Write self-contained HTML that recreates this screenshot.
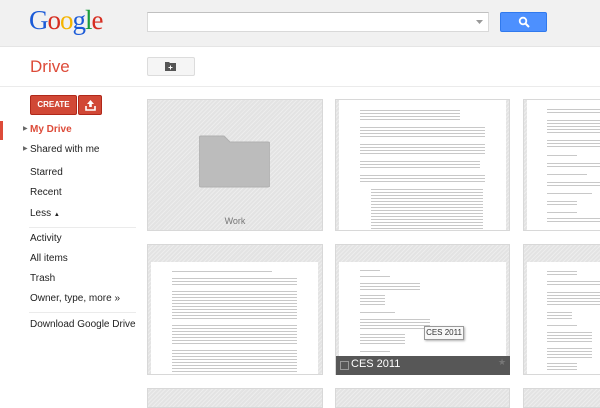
<!DOCTYPE html>
<html><head><meta charset="utf-8">
<style>
*{margin:0;padding:0;box-sizing:border-box}
body{width:600px;height:400px;overflow:hidden;background:#fff;font-family:"Liberation Sans",Arial,sans-serif;position:relative}
.abs{position:absolute}
#hdr{left:0;top:0;width:600px;height:47px;background:#f1f1f1;border-bottom:1px solid #e5e5e5}
.logo{left:29px;top:5px;font-family:"Liberation Serif",serif;font-size:27px;letter-spacing:-1px}
#search{left:147px;top:12px;width:342px;height:20px;background:#fff;border:1px solid #d9d9d9;border-top-color:#c0c0c0}
#sbtn{left:500px;top:12px;width:47px;height:20px;background:#4d90fe;border:1px solid #3079ed;border-radius:2px}
.drive{left:30px;top:57px;font-size:17px;color:#dd4b39}
#fbtn{left:147px;top:57px;width:48px;height:19px;background:#f5f5f5;border:1px solid #dcdcdc;border-radius:2px}
.sep{left:0;top:86px;width:600px;height:1px;background:#ebebeb}
#create{left:30px;top:95px;width:47px;height:20px;background:#d14836;border:1px solid #b0281a;border-radius:2px;color:#fff;font-size:8px;font-weight:bold;text-align:center;line-height:18px}
#up{left:78px;top:95px;width:24px;height:20px;background:#d14836;border:1px solid #b0281a;border-radius:2px}
.nav{font-size:10px;color:#222;left:30px;white-space:nowrap}
.hl{left:29px;width:107px;height:1px;background:#ebebeb}
.tile{background:#e3e3e3;background-image:repeating-linear-gradient(135deg,rgba(255,255,255,.35) 0 1px,transparent 1px 3px);border:1px solid #d8d8d8}
.page{background:#fff;overflow:hidden}
.t{position:absolute;background-image:repeating-linear-gradient(180deg,#c8c8c8 0 1px,transparent 1px 3px)}
</style></head><body>
<div id="hdr" class="abs"></div>
<div class="abs logo"><span style="color:#1a5ad7">G</span><span style="color:#d62d20">o</span><span style="color:#f4b400">o</span><span style="color:#1a5ad7">g</span><span style="color:#189c3c">l</span><span style="color:#d62d20">e</span></div>
<div id="search" class="abs"><svg class="abs" style="left:328px;top:7px" width="7" height="5"><path d="M0 0H7L3.5 4Z" fill="#999"/></svg></div>
<div id="sbtn" class="abs"><svg class="abs" style="left:17px;top:3px" width="12" height="12"><circle cx="5" cy="5" r="3.3" stroke="#fff" stroke-width="1.8" fill="none"/><path d="M7.5 7.5L11 11" stroke="#fff" stroke-width="2"/></svg></div>
<div class="abs drive">Drive</div>
<div id="fbtn" class="abs"><svg class="abs" style="left:17px;top:3px" width="12" height="10"><path d="M0 1h4l1 1h6v8H0Z" fill="#555"/><path d="M5.5 4.5v4M3.5 6.5h4" stroke="#fff" stroke-width="1"/></svg></div>
<div class="abs sep"></div>
<div id="create" class="abs">CREATE</div>
<div id="up" class="abs"><svg class="abs" style="left:6px;top:3px" width="11" height="12"><path d="M5.5 1L2 5h2.2v3h2.6V5H9Z" fill="#fff"/><path d="M1 7v4h9V7" stroke="#fff" stroke-width="1.6" fill="none"/></svg></div>
<div class="abs" style="left:0;top:121px;width:3px;height:19px;background:#dd4b39"></div>
<div class="abs nav" style="left:23px;top:125px;font-size:6px;color:#666">▶</div>
<div class="abs nav" style="top:124px;color:#dd4b39;font-weight:bold">My Drive</div>
<div class="abs nav" style="left:23px;top:145px;font-size:6px;color:#666">▶</div>
<div class="abs nav" style="top:144px">Shared with me</div>
<div class="abs nav" style="top:167px">Starred</div>
<div class="abs nav" style="top:187px">Recent</div>
<div class="abs nav" style="top:208px">Less <span style="font-size:6px">▲</span></div>
<div class="abs hl" style="top:227px"></div>
<div class="abs nav" style="top:233px">Activity</div>
<div class="abs nav" style="top:253px">All items</div>
<div class="abs nav" style="top:273px">Trash</div>
<div class="abs nav" style="top:293px">Owner, type, more »</div>
<div class="abs hl" style="top:312px"></div>
<div class="abs nav" style="top:319px">Download Google Drive</div>

<!-- row1 -->
<div class="abs tile" style="left:147px;top:99px;width:176px;height:132px"></div>
<svg class="abs" style="left:199px;top:135px" width="71" height="53"><path d="M2 1h23l6 6h38a2 2 0 0 1 2 2v41a2 2 0 0 1-2 2H2a2 2 0 0 1-2-2V3a2 2 0 0 1 2-2Z" fill="#bcbcbc" stroke="#b0b0b0"/></svg>
<div class="abs" style="left:147px;top:216px;width:176px;text-align:center;font-size:9px;color:#777">Work</div>

<div class="abs tile" style="left:335px;top:99px;width:175px;height:132px"></div>
<div class="abs page" style="left:339px;top:100px;width:167px;height:130px">
 <div class="t" style="left:21px;top:10px;width:100px;height:12px"></div>
 <div class="t" style="left:21px;top:27px;width:125px;height:12px"></div>
 <div class="t" style="left:21px;top:44px;width:125px;height:12px"></div>
 <div class="t" style="left:21px;top:61px;width:120px;height:9px"></div>
 <div class="t" style="left:21px;top:75px;width:125px;height:9px"></div>
 <div class="t" style="left:32px;top:89px;width:112px;height:40px"></div>
</div>
<div class="abs tile" style="left:523px;top:99px;width:80px;height:132px"></div>
<div class="abs page" style="left:527px;top:100px;width:73px;height:130px">
 <div class="t" style="left:20px;top:9px;width:60px;height:6px"></div>
 <div class="t" style="left:20px;top:20px;width:60px;height:15px"></div>
 <div class="t" style="left:20px;top:40px;width:60px;height:9px"></div>
 <div class="t" style="left:20px;top:55px;width:30px;height:3px"></div>
 <div class="t" style="left:20px;top:63px;width:60px;height:6px"></div>
 <div class="t" style="left:20px;top:74px;width:40px;height:3px"></div>
 <div class="t" style="left:20px;top:82px;width:60px;height:6px"></div>
 <div class="t" style="left:20px;top:93px;width:45px;height:3px"></div>
 <div class="t" style="left:20px;top:101px;width:30px;height:6px"></div>
 <div class="t" style="left:20px;top:112px;width:30px;height:3px"></div>
 <div class="t" style="left:20px;top:118px;width:60px;height:6px"></div>
</div>

<!-- row2 -->
<div class="abs tile" style="left:147px;top:244px;width:176px;height:131px"></div>
<div class="abs page" style="left:151px;top:262px;width:167px;height:112px">
 <div class="t" style="left:21px;top:9px;width:100px;height:3px"></div>
 <div class="t" style="left:21px;top:16px;width:125px;height:9px"></div>
 <div class="t" style="left:21px;top:29px;width:125px;height:30px"></div>
 <div class="t" style="left:21px;top:63px;width:125px;height:21px"></div>
 <div class="t" style="left:21px;top:88px;width:125px;height:22px"></div>
</div>
<div class="abs tile" style="left:335px;top:244px;width:175px;height:131px"></div>
<div class="abs page" style="left:339px;top:262px;width:167px;height:94px">
 <div class="t" style="left:21px;top:8px;width:20px;height:3px"></div>
 <div class="t" style="left:21px;top:14px;width:30px;height:3px"></div>
 <div class="t" style="left:21px;top:21px;width:60px;height:9px"></div>
 <div class="t" style="left:21px;top:33px;width:25px;height:12px"></div>
 <div class="t" style="left:21px;top:50px;width:35px;height:3px"></div>
 <div class="t" style="left:21px;top:57px;width:70px;height:12px"></div>
 <div class="t" style="left:21px;top:72px;width:45px;height:12px"></div>
 <div class="t" style="left:21px;top:89px;width:30px;height:3px"></div>
</div>
<div class="abs" style="left:336px;top:356px;width:174px;height:19px;background:#575757"></div>
<div class="abs" style="left:340px;top:361px;width:9px;height:9px;border:1px solid #999"></div>
<div class="abs" style="left:351px;top:358px;font-size:11px;color:#fff">CES 2011</div>
<div class="abs" style="left:498px;top:357px;font-size:9px;color:#777">★</div>
<div class="abs" style="left:424px;top:326px;width:40px;height:14px;background:#f8f8f8;border:1px solid #999;box-shadow:1px 1px 2px rgba(0,0,0,.3);font-size:8px;text-align:center;line-height:12px;color:#333;white-space:nowrap">CES 2011</div>
<div class="abs tile" style="left:523px;top:244px;width:80px;height:131px"></div>
<div class="abs page" style="left:527px;top:262px;width:73px;height:112px">
 <div class="t" style="left:20px;top:9px;width:30px;height:6px"></div>
 <div class="t" style="left:20px;top:19px;width:60px;height:6px"></div>
 <div class="t" style="left:20px;top:30px;width:55px;height:15px"></div>
 <div class="t" style="left:20px;top:50px;width:25px;height:9px"></div>
 <div class="t" style="left:20px;top:63px;width:30px;height:3px"></div>
 <div class="t" style="left:20px;top:70px;width:45px;height:12px"></div>
 <div class="t" style="left:20px;top:86px;width:45px;height:12px"></div>
 <div class="t" style="left:20px;top:101px;width:30px;height:9px"></div>
</div>

<!-- row3 -->
<div class="abs tile" style="left:147px;top:388px;width:176px;height:20px"></div>
<div class="abs tile" style="left:335px;top:388px;width:175px;height:20px"></div>
<div class="abs tile" style="left:523px;top:388px;width:80px;height:20px"></div>
</body></html>
